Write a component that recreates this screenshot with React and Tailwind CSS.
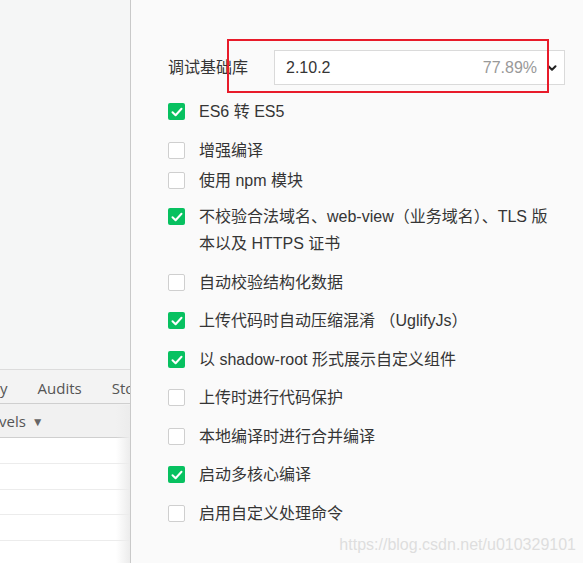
import { ChevronDown } from 'lucide-react'

const OPTIONS = [
  { label: 'ES6 转 ES5', checked: true, mt: 'mt-[13px]' },
  { label: '增强编译', checked: false, mt: 'mt-[12px]' },
  { label: '使用 npm 模块', checked: false, mt: 'mt-[3px]' },
  { label: '不校验合法域名、web-view（业务域名）、TLS 版本以及 HTTPS 证书', checked: true, mt: 'mt-[9px]' },
  { label: '自动校验结构化数据', checked: false, mt: 'mt-[12px]' },
  { label: '上传代码时自动压缩混淆 （UglifyJs）', checked: true, mt: 'mt-[11px]' },
  { label: '以 shadow-root 形式展示自定义组件', checked: true, mt: 'mt-[12px]' },
  { label: '上传时进行代码保护', checked: false, mt: 'mt-[11px]' },
  { label: '本地编译时进行合并编译', checked: false, mt: 'mt-[12px]' },
  { label: '启动多核心编译', checked: true, mt: 'mt-[11px]' },
  { label: '启用自定义处理命令', checked: false, mt: 'mt-[12px]' },
]

export default function App() {
  return (
    <div className="flex w-[583px] h-[563px] overflow-hidden font-['Liberation_Sans','Noto_Sans_CJK_SC',sans-serif]">
      {/* devtools behind the panel */}
      <div className="relative w-[130px] shrink-0 flex flex-col bg-[#f5f6f6] overflow-hidden">
        <div className="h-[370px] border-b border-[#dcdcdc]" />
        <div className="h-[34px] flex items-center pt-[3px] bg-[#f3f3f3] border-b border-[#cfcfcf] text-[15px] text-[#555] font-['Open_Sans',sans-serif] whitespace-nowrap">
          <span>y</span>
          <span className="ml-[30px]">Audits</span>
          <span className="ml-[30px]">Sto</span>
        </div>
        <div className="h-[34px] flex items-center pt-[2px] bg-[#f1f1f1] border-b border-[#cfcfcf] text-[15px] text-[#555] font-['Open_Sans',sans-serif] whitespace-nowrap">
          <span className="-ml-[1px]">vels</span>
          <span className="ml-[6px] text-[12px] text-[#666]">▼</span>
        </div>
        <div className="flex-1 bg-white flex flex-col">
          <div className="h-[26px] border-b border-[#ececec]" />
          <div className="h-[26px] border-b border-[#ececec]" />
          <div className="h-[25px] border-b border-[#ececec]" />
          <div className="h-[26px] border-b border-[#ececec]" />
        </div>
        <div className="absolute right-0 top-[405px] bottom-0 w-[14px] bg-gradient-to-l from-[#ececec] to-transparent" />
      </div>

      {/* settings panel */}
      <div className="relative flex-1 bg-[#fafafa] border-l border-[#c9c9c9] pl-[37px] pt-[50px] text-[16px] text-[#353535]">
        <div className="flex items-center">
          <span className="w-[106px] shrink-0">调试基础库</span>
          <div className="w-[291px] h-[35px] flex items-center bg-white border border-[#dadada] pl-[11px] pr-[5px]">
            <span className="flex-1">2.10.2</span>
            <span className="text-[#999]">77.89%</span>
            <ChevronDown size={14} strokeWidth={3.5} className="ml-[8px] text-[#222]" />
          </div>
        </div>

        <div className="flex flex-col">
          {OPTIONS.map((o) => (
            <div key={o.label} className={`flex items-start ${o.mt}`}>
              <Check checked={o.checked} />
              <span className="ml-[14px] w-[356px] leading-[27px]">{o.label}</span>
            </div>
          ))}
        </div>

        {/* annotation box */}
        <div className="absolute left-[96px] top-[39px] w-[322px] h-[54px] border-2 border-[#e81b2a]" />

        {/* watermark */}
        <div className="absolute right-[7px] bottom-[6px] text-[16px] text-[#dedede] font-['Liberation_Sans',sans-serif]">
          https://blog.csdn.net/u010329101
        </div>
      </div>
    </div>
  )
}

function Check({ checked }) {
  if (checked) {
    return (
      <span className="mt-[5px] w-[17px] h-[17px] shrink-0 rounded-[2px] bg-[#07c160] flex items-center justify-center">
        <svg width="12" height="10" viewBox="0 0 12 10" fill="none">
          <path d="M1.5 5.2 L4.6 8.2 L10.5 1.8" stroke="white" strokeWidth="2" strokeLinecap="round" strokeLinejoin="round" />
        </svg>
      </span>
    )
  }
  return <span className="mt-[5px] w-[17px] h-[17px] shrink-0 rounded-[2px] bg-white border border-[#cfcfcf]" />
}
